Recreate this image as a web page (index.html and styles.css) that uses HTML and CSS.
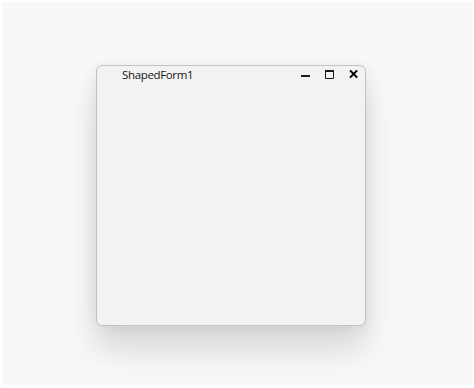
FILE: index.html
```html
<!DOCTYPE html>
<html>
<head>
<meta charset="utf-8">
<link rel="stylesheet" href="styles.css">
</head>
<body>
<div class="canvas">
  <div class="window">
    <div class="titlebar">
      <span class="title">ShapedForm1</span>
      <div class="controls">
        <svg class="btn" width="10" height="10" viewBox="0 0 10 10"><rect x="0" y="5" width="9" height="2" fill="#1a1a1a"/></svg>
        <svg class="btn" width="10" height="10" viewBox="0 0 10 10"><path d="M0.5 1H8.5V8.5H0.5Z" fill="none" stroke="#1a1a1a" stroke-width="1"/><rect x="0" y="0" width="9" height="2" fill="#1a1a1a"/></svg>
        <svg class="btn" width="10" height="10" viewBox="0 0 10 10"><path d="M1 0.4L8.2 7.6M8.2 0.4L1 7.6" stroke="#000" stroke-width="2" fill="none"/></svg>
      </div>
    </div>
  </div>
</div>
</body>
</html>
```
FILE: styles.css
```css
html, body {
  margin: 0;
  padding: 0;
  background: #ffffff;
}
body {
  width: 474px;
  height: 388px;
  padding: 2px 2px 3px 2px;
  box-sizing: border-box;
  font-family: "Open Sans", "Noto Sans", sans-serif;
}
.canvas {
  width: 100%;
  height: 100%;
  background: #f8f8f8;
  padding: 63px 0 0 94px;
  box-sizing: border-box;
}
.window {
  width: 270px;
  height: 261px;
  box-sizing: border-box;
  background: #f2f2f2;
  border: 1px solid #c2c2c2;
  border-radius: 6px;
  box-shadow: 0 24px 32px rgba(0, 0, 0, 0.13), 0 2px 16px rgba(0, 0, 0, 0.07);
}
.titlebar {
  display: flex;
  align-items: flex-start;
  justify-content: space-between;
  padding: 0 6px 0 25px;
}
.title {
  font-size: 11.5px;
  letter-spacing: -0.35px;
  color: #161616;
  line-height: 16px;
  padding-top: 1px;
}
.controls {
  display: flex;
  gap: 14px;
  margin-top: 4px;
}
.btn {
  display: block;
}
```
